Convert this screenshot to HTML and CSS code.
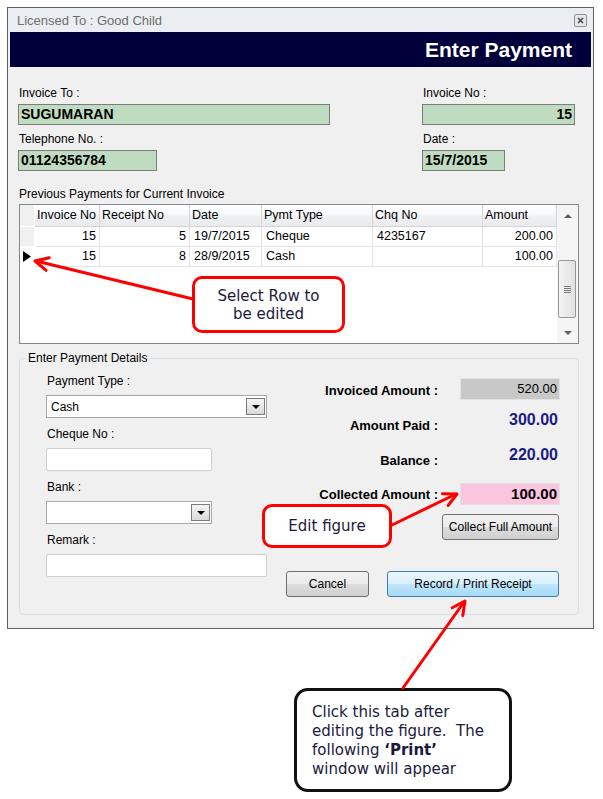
FILE: index.html
```html
<!DOCTYPE html>
<html lang="en">
<head>
  <meta charset="UTF-8" />
  <meta name="viewport" content="width=device-width, initial-scale=1.0"/>
  <title>Enter Payment</title>
  <link rel="stylesheet" href="styles.css">
</head>
<body>
<div class="page">

  <div class="window">
    <div class="titlebar">
      <span>Licensed To : Good Child</span>
      <svg class="close-box" width="13" height="13" viewBox="0 0 13 13">
        <rect x="0.5" y="0.5" width="12" height="12" rx="1.5" fill="#e4e6ea" stroke="#8e9096"/>
        <path d="M4 4 L9 9 M9 4 L4 9" stroke="#4a4a4a" stroke-width="1.6"/>
      </svg>
    </div>

    <div class="frame">
      <div class="banner">Enter Payment</div>

      <div class="form">
        <div class="top-fields">
          <div class="col-left">
            <div class="lbl">Invoice To :</div>
            <div class="green-field name">SUGUMARAN</div>
            <div class="lbl next">Telephone No. :</div>
            <div class="green-field phone">01124356784</div>
          </div>
          <div class="col-right">
            <div class="lbl">Invoice No :</div>
            <div class="green-field inv-no">15</div>
            <div class="lbl next">Date :</div>
            <div class="green-field date">15/7/2015</div>
          </div>
        </div>

        <div class="lbl grid-caption">Previous Payments for Current Invoice</div>
        <div class="grid">
          <div class="grid-table">
            <div class="grid-row head">
              <div class="ind"></div>
              <div>Invoice No</div>
              <div>Receipt No</div>
              <div>Date</div>
              <div>Pymt Type</div>
              <div>Chq No</div>
              <div>Amount</div>
            </div>
            <div class="grid-row">
              <div class="ind"></div>
              <div class="num">15</div>
              <div class="num">5</div>
              <div>19/7/2015</div>
              <div>Cheque</div>
              <div>4235167</div>
              <div class="num">200.00</div>
            </div>
            <div class="grid-row">
              <div class="ind current">
                <svg width="8" height="11" viewBox="0 0 8 11"><polygon points="0,0 8,5.5 0,11" fill="#000"/></svg>
              </div>
              <div class="num">15</div>
              <div class="num">8</div>
              <div>28/9/2015</div>
              <div>Cash</div>
              <div></div>
              <div class="num">100.00</div>
            </div>
          </div>
          <div class="scrollbar">
            <div class="scroll-btn"><span class="tri-up"></span></div>
            <div class="scroll-track">
              <div class="thumb"><span></span><span></span><span></span><span></span></div>
            </div>
            <div class="scroll-btn"><span class="tri-down"></span></div>
          </div>
        </div>

        <div class="group">
          <div class="group-title">Enter Payment Details</div>
          <div class="group-body">
            <div class="pay-left">
              <div class="lbl">Payment Type :</div>
              <div class="combo wide">
                <span class="combo-text">Cash</span>
                <span class="combo-btn"><span class="tri-down dark"></span></span>
              </div>
              <div class="lbl next">Cheque No :</div>
              <div class="textbox short"></div>
              <div class="lbl next">Bank :</div>
              <div class="combo short">
                <span class="combo-text"></span>
                <span class="combo-btn"><span class="tri-down dark"></span></span>
              </div>
              <div class="lbl next">Remark :</div>
              <div class="textbox wide"></div>
            </div>

            <div class="pay-right">
              <div class="amt-row r1">
                <div class="amt-label">Invoiced Amount :</div>
                <div class="amt-box invoiced">520.00</div>
              </div>
              <div class="amt-row r2">
                <div class="amt-label">Amount Paid :</div>
                <div class="amt-value">300.00</div>
              </div>
              <div class="amt-row r3">
                <div class="amt-label">Balance :</div>
                <div class="amt-value">220.00</div>
              </div>
              <div class="amt-row r4">
                <div class="amt-label low">Collected Amount :</div>
                <div class="amt-box collected">100.00</div>
              </div>
              <button class="btn btn-full">Collect Full Amount</button>
              <div class="actions">
                <button class="btn btn-cancel">Cancel</button>
                <button class="btn btn-record">Record / Print Receipt</button>
              </div>
            </div>
          </div>
        </div>
      </div>
    </div>
  </div>

  <div class="note-box">
    Click this tab after<br>
    editing the figure.&nbsp; The<br>
    following <b>&lsquo;Print&rsquo;</b><br>
    window will appear
  </div>

  <!-- annotation arrows -->
  <svg class="arrows" width="603" height="799" viewBox="0 0 603 799">
    <g stroke="#ff0000" stroke-width="3" fill="none" stroke-linecap="round" stroke-linejoin="round">
      <line x1="193" y1="299" x2="36" y2="261"/>
      <polyline points="46.1,270.4 35,261 49.2,257.7"/>
      <line x1="392" y1="525" x2="456" y2="494"/>
      <polyline points="442.5,493.7 457,494 448.1,505.5"/>
      <line x1="403" y1="688" x2="464" y2="602"/>
      <polyline points="452.2,607.8 465,601 462.8,615.4"/>
    </g>
  </svg>

  <div class="callout select-row">Select Row to<br>be edited</div>
  <div class="callout edit-fig">Edit figure</div>

</div>
</body>
</html>
```

FILE: styles.css
```css
* {
  box-sizing: border-box;
  margin: 0;
  padding: 0;
}

body {
  background: #fff;
  font-family: "Liberation Sans", Arial, sans-serif;
  font-size: 12px;
  color: #000;
}

.page {
  position: relative;
  width: 603px;
  height: 799px;
  overflow: hidden;
}

/* dialog window */
.window {
  margin: 7px 0 0 7px;
  width: 587px;
  border: 1px solid #5d6066;
  background: #f0f0f0;
}

.titlebar {
  height: 24px;
  display: flex;
  align-items: center;
  justify-content: space-between;
  padding: 0 6px 0 9px;
  background: #eaedf1;
  color: #6d6d6d;
  font-size: 13px;
}

.close-box {
  display: block;
}

.frame {
  padding: 0 2px 2px;
}

.banner {
  height: 35px;
  background: #00003a;
  color: #fff;
  font-weight: bold;
  font-size: 21px;
  line-height: 35px;
  text-align: right;
  padding-right: 19px;
}

.form {
  padding: 19px 0 11px 8px;
}

.lbl {
  line-height: 14px;
  margin-bottom: 4px;
  padding-left: 1px;
}

.lbl.next {
  margin-top: 7px;
}

/* invoice info */
.top-fields {
  display: flex;
  gap: 92px;
}

.col-left {
  width: 312px;
}

.col-right {
  width: 153px;
}

.green-field {
  height: 21px;
  border: 1px solid #7c7c7c;
  background: #c0dcc0;
  font-weight: bold;
  font-size: 14px;
  line-height: 19px;
  padding: 0 2px;
}

.phone {
  width: 139px;
}

.inv-no {
  text-align: right;
}

.date {
  width: 83px;
}

.grid-caption {
  margin-top: 16px;
  margin-bottom: 3px;
}

/* payments grid */
.grid {
  margin-left: 1px;
  width: 560px;
  height: 140px;
  border: 1px solid #828790;
  background: #fff;
  display: flex;
}

.grid-table {
  width: 537px;
  font-size: 12.5px;
}

.grid-row {
  display: grid;
  grid-template-columns: 15px 65px 90px 72px 111px 110px 74px;
}

.grid-row div {
  height: 20px;
  line-height: 19px;
  padding: 0 3px 0 4px;
  border-right: 1px solid #e4e4e4;
  border-bottom: 1px solid #e4e4e4;
  white-space: nowrap;
  overflow: hidden;
}

.grid-row.head div {
  height: 22px;
  line-height: 21px;
  padding-left: 2px;
  border-right-color: #d5d5d5;
  border-bottom-color: #d5d5d5;
  background: linear-gradient(#ffffff 0%, #f7f8fa 45%, #eef0f2 55%, #e9ebee 100%);
}

.grid-row div.num {
  text-align: right;
}

.grid-row div.ind {
  padding: 0;
  background: #f0f0f0;
  border-right-color: #fff;
  border-bottom-color: #fff;
}

.grid-row div.current {
  background: #fff;
  padding: 4px 0 0 3px;
}

.grid-row div.current svg {
  display: block;
}

.scrollbar {
  width: 21px;
  display: flex;
  flex-direction: column;
  background: #f5f5f5;
}

.scroll-btn {
  height: 21px;
  display: flex;
  align-items: center;
  justify-content: center;
}

.scroll-track {
  flex: 1;
}

.thumb {
  margin: 34px 2px 0 1px;
  height: 58px;
  border: 1px solid #979797;
  border-radius: 2px;
  background: linear-gradient(to right, #f4f4f4, #e0e0e0);
  display: flex;
  flex-direction: column;
  align-items: center;
  justify-content: center;
  gap: 1px;
}

.thumb span {
  width: 7px;
  height: 1px;
  background: #7a7a7a;
}

.tri-up {
  width: 0;
  height: 0;
  border-left: 4px solid transparent;
  border-right: 4px solid transparent;
  border-bottom: 4px solid #606060;
}

.tri-down {
  width: 0;
  height: 0;
  border-left: 4px solid transparent;
  border-right: 4px solid transparent;
  border-top: 4px solid #606060;
}

.tri-down.dark {
  border-top-color: #000;
}

/* payment details group */
.group {
  margin: 14px 0 0 1px;
  width: 560px;
  border: 1px solid #d5dfe5;
  border-radius: 4px;
  padding-bottom: 17px;
}

.group-title {
  width: max-content;
  margin: -8px 0 0 6px;
  padding: 0 2px;
  background: #f0f0f0;
  line-height: 14px;
}

.group-body {
  display: flex;
  gap: 19px;
  margin-top: 9px;
  padding-left: 26px;
}

.pay-left {
  width: 221px;
}

.pay-left .lbl {
  margin-bottom: 7px;
}

.pay-left .lbl.next {
  margin-top: 9px;
}

.combo {
  height: 23px;
  border: 1px solid #a7a7a7;
  background: #fff;
  display: flex;
  align-items: center;
  padding: 0 1px 0 4px;
}

.combo-text {
  flex: 1;
}

.combo-btn {
  width: 19px;
  height: 17px;
  border: 1px solid #7c7c7c;
  background: linear-gradient(#f6f6f6, #d9d9d9);
  display: flex;
  align-items: center;
  justify-content: center;
}

.textbox {
  height: 23px;
  border: 1px solid #cfcfcf;
  border-radius: 2px;
  background: #fff;
}

.wide {
  width: 221px;
}

.short {
  width: 166px;
}

.pay-right {
  width: 274px;
  padding-top: 4px;
  display: flex;
  flex-direction: column;
}

.amt-row {
  display: grid;
  grid-template-columns: 152px 100px;
  column-gap: 22px;
}

.r1 { height: 22px; }
.r2 { height: 24px; margin-top: 11px; }
.r3 { height: 24px; margin-top: 11px; }
.r4 { height: 22px; margin-top: 13px; }

.amt-label {
  align-self: end;
  text-align: right;
  font-weight: bold;
  font-size: 13px;
  line-height: 14px;
  margin-bottom: 2px;
}

.amt-label.low {
  margin-bottom: 3px;
}

.amt-box {
  height: 22px;
  border: 1px solid #e2e2e2;
  text-align: right;
  padding-right: 2px;
  line-height: 20px;
}

.invoiced {
  background: #c8c8c8;
  font-size: 13px;
}

.collected {
  background: #f9c5df;
  font-weight: bold;
  font-size: 15px;
}

.amt-value {
  align-self: start;
  text-align: right;
  padding-right: 2px;
  font-weight: bold;
  font-size: 16px;
  line-height: 18px;
  color: #1b1b85;
}

.btn {
  height: 26px;
  border: 1px solid #707070;
  border-radius: 3px;
  background: linear-gradient(#f2f2f2 0%, #ebebeb 50%, #dddddd 51%, #cfcfcf 100%);
  font-family: inherit;
  font-size: 12px;
  color: #000;
}

.btn-full {
  width: 117px;
  align-self: flex-end;
  margin: 9px 1px 0 0;
}

.actions {
  display: flex;
  gap: 18px;
  margin-top: 31px;
}

.btn-cancel {
  width: 83px;
}

.btn-record {
  width: 172px;
  border-color: #3c7fb1;
  background: linear-gradient(#eaf6fd 0%, #d9f0fc 50%, #bee6fd 51%, #a7d9f5 100%);
}

/* annotations */
.note-box {
  margin: 59px 0 0 294px;
  width: 218px;
  height: 104px;
  border: 3px solid #111;
  border-radius: 14px;
  background: #fff;
  padding: 12px 0 0 15px;
  font-family: "DejaVu Sans", Verdana, sans-serif;
  font-size: 15px;
  line-height: 19px;
  color: #1a1a3c;
}

.arrows {
  position: absolute;
  left: 0;
  top: 0;
  pointer-events: none;
}

.callout {
  position: absolute;
  display: flex;
  align-items: center;
  justify-content: center;
  text-align: center;
  border: 3px solid #ff0000;
  border-radius: 10px;
  background: #fff;
  font-family: "DejaVu Sans", Verdana, sans-serif;
  font-size: 15px;
  line-height: 18px;
  color: #1a1a3c;
}

.select-row {
  left: 192px;
  top: 276px;
  width: 153px;
  height: 57px;
}

.edit-fig {
  left: 262px;
  top: 504px;
  width: 130px;
  height: 44px;
}
```
